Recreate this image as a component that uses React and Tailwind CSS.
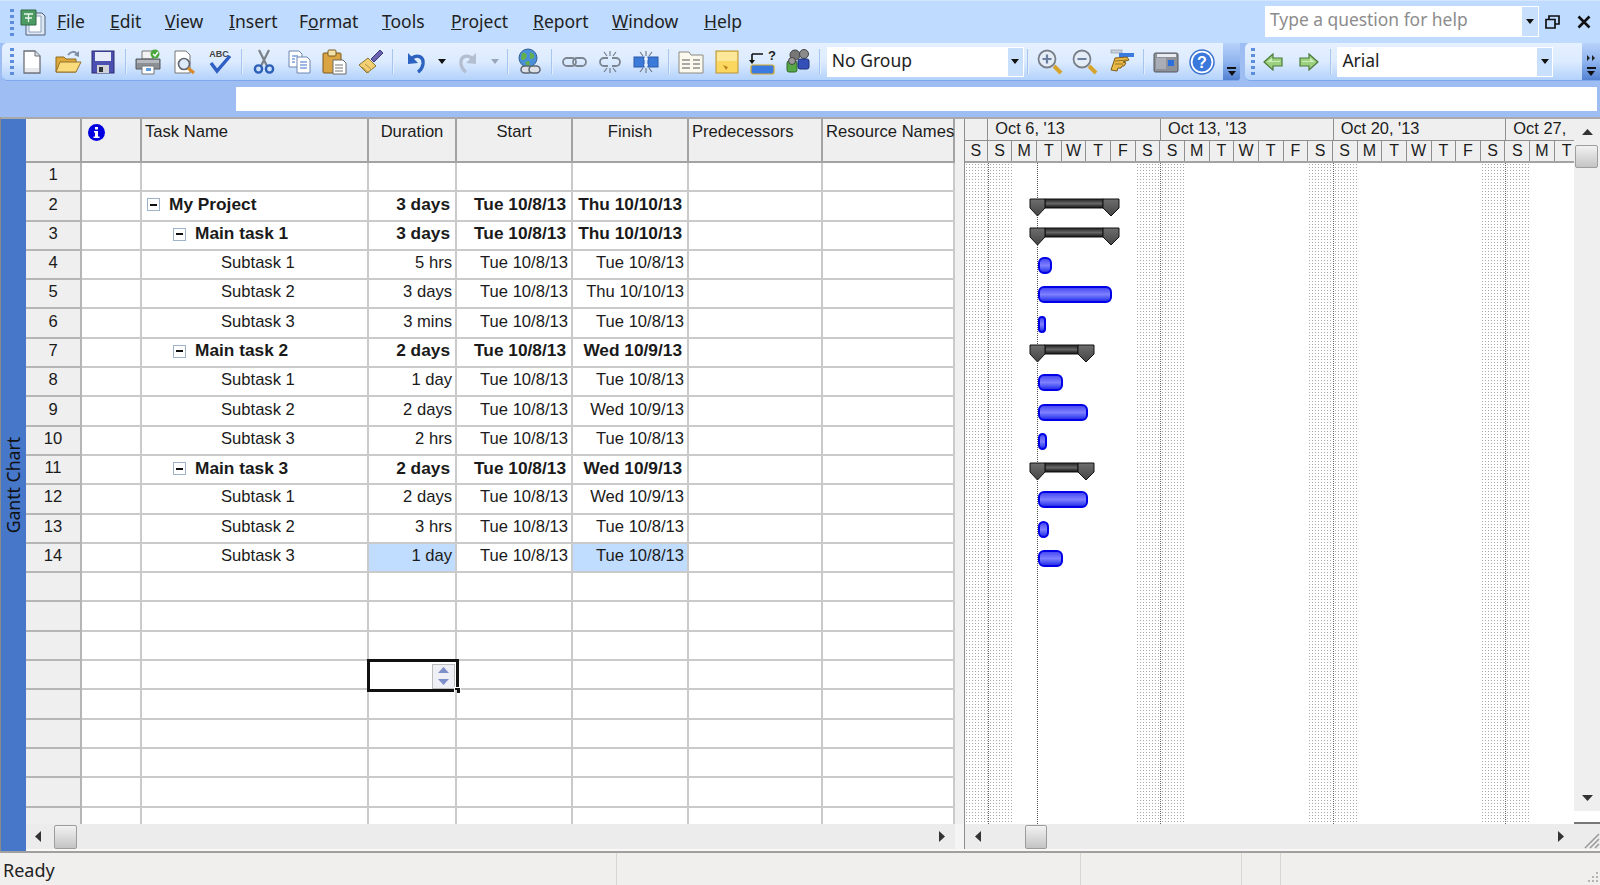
import React from 'react';

const arial = "font-['Liberation_Sans',Arial,sans-serif]";
const tahoma = "font-['Noto_Sans',Tahoma,sans-serif]";

const Ico = ({ children }) => (
  <svg width="28" height="28" viewBox="0 0 28 28" className="block">{children}</svg>
);

// toolbar icons
const NewIcon = () => (
  <Ico>
    <path d="M6 3h11l5 5v17H6z" fill="#fff" stroke="#6b6f78" strokeWidth="1.3" />
    <path d="M17 3v5h5" fill="#d8dde6" stroke="#6b6f78" strokeWidth="1" />
    <path d="M7 20h14v4H7z" fill="#e6e8ec" />
  </Ico>
);
const OpenIcon = () => (
  <Ico>
    <path d="M2 9h8l2 2h10v13H2z" fill="#e0a93b" stroke="#8a6a22" />
    <path d="M2 24l4-10h21l-5 10z" fill="#fbdc7c" stroke="#94712a" />
    <path d="M14 7c3-4 7-4 9-1" fill="none" stroke="#7f8ea6" strokeWidth="2" />
    <path d="M25 3l0 6-5-2z" fill="#7f8ea6" />
  </Ico>
);
const SaveIcon = () => (
  <Ico>
    <rect x="3" y="3" width="22" height="22" fill="#4a4fb0" stroke="#2a2d70" />
    <rect x="6" y="4" width="16" height="9" fill="#e8ecf8" />
    <rect x="8" y="17" width="12" height="8" fill="#d0d2d8" />
    <rect x="10" y="19" width="4" height="5" fill="#30323c" />
  </Ico>
);
const PrintIcon = () => (
  <Ico>
    <path d="M8 3h11v8H8z" fill="#f2f2f2" stroke="#777" />
    <path d="M2 11h24v10H2z" fill="#8b8f96" stroke="#55585e" />
    <path d="M3 12h22v3H3z" fill="#b6babf" />
    <path d="M8 18h12v8H8z" fill="#fff" stroke="#777" />
    <rect x="12" y="20" width="5" height="3" fill="#5d9be0" />
    <circle cx="21" cy="6" r="4.5" fill="#4aa83c" />
    <path d="M19 6l2 2 3-4" stroke="#fff" strokeWidth="1.4" fill="none" />
  </Ico>
);
const PreviewIcon = () => (
  <Ico>
    <path d="M5 3h11l4 4v18H5z" fill="#fff" stroke="#777" />
    <circle cx="14" cy="16" r="5.5" fill="#dcebf7" stroke="#62666e" strokeWidth="1.6" />
    <path d="M18 20l6 5" stroke="#d98a2a" strokeWidth="3.2" />
  </Ico>
);
const SpellIcon = () => (
  <Ico>
    <text x="14" y="9" textAnchor="middle" fontSize="9" fontWeight="700" fontFamily="Liberation Sans" fill="#444">ABC</text>
    <path d="M6 15l6 8L25 8" fill="none" stroke="#2f5fc4" strokeWidth="3.4" />
  </Ico>
);
const CutIcon = () => (
  <Ico>
    <path d="M9 2l8 16M19 2l-8 16" stroke="#7b7f86" strokeWidth="2.2" />
    <circle cx="8.5" cy="21" r="3.6" fill="none" stroke="#2c5fb8" strokeWidth="2.4" />
    <circle cx="19.5" cy="21" r="3.6" fill="none" stroke="#2c5fb8" strokeWidth="2.4" />
  </Ico>
);
const CopyIcon = () => (
  <Ico>
    <path d="M3 3h10l3 3v13H3z" fill="#fff" stroke="#6f86b0" />
    <path d="M11 9h10l3 3v13H11z" fill="#fff" stroke="#6f86b0" />
    <path d="M6 8h6M6 11h3M6 14h3M14 14h7M14 17h7M14 20h7" stroke="#3c74c8" strokeWidth="1.2" />
  </Ico>
);
const PasteIcon = () => (
  <Ico>
    <rect x="2" y="5" width="18" height="20" rx="1" fill="#d9a441" stroke="#7b5b1e" />
    <rect x="7" y="2" width="8" height="6" rx="1" fill="#f4e3a8" stroke="#7b5b1e" />
    <path d="M12 12h10l3 3v11H12z" fill="#fff" stroke="#6a6a6a" />
    <path d="M14 17h8M14 20h8M14 23h8" stroke="#777" />
  </Ico>
);
const PainterIcon = () => (
  <Ico>
    <path d="M2 17l9-7 8 8-9 7z" fill="#f1cf72" stroke="#8c7434" />
    <path d="M5 19l7 6M8 16l7 6" stroke="#b39140" />
    <path d="M14 11l3 3L26 5l-3-3z" fill="#6a62b0" stroke="#3e3a78" />
  </Ico>
);
const UndoIcon = () => (
  <Ico>
    <path d="M10 10c6-4 12-1 11 6-.5 3-2 6-5 8" fill="none" stroke="#2c62c0" strokeWidth="3.4" />
    <path d="M6 5v11l10-1z" fill="#2c62c0" />
  </Ico>
);
const RedoIcon = () => (
  <Ico>
    <path d="M18 10c-6-4-12-1-11 6 .5 3 2 6 5 8" fill="none" stroke="#b3bfd0" strokeWidth="3.4" />
    <path d="M22 5v11l-10-1z" fill="#b3bfd0" />
  </Ico>
);
const Caret = ({ color = '#111' }) => (
  <svg width="10" height="6" viewBox="0 0 10 6" className="block"><path d="M1 0h8L5 5z" fill={color} /></svg>
);
const Chain = ({ color = '#7d8591' }) => (
  <g fill="none" stroke={color} strokeWidth="1.8">
    <rect x="2" y="10" width="13" height="8" rx="4" />
    <rect x="12" y="10" width="13" height="8" rx="4" />
  </g>
);
const WebIcon = () => (
  <Ico>
    <circle cx="12" cy="10" r="9" fill="#4a90d8" stroke="#2f5d96" />
    <path d="M6 5c4-1 6 2 4 5s-4 2-5 1zM14 4c3 1 5 3 4 6l-4 1zM9 14l4-1 1 4-3 1z" fill="#63b04a" />
    <rect x="5" y="18" width="11" height="7" rx="3.5" fill="#dde1e6" stroke="#5c6672" strokeWidth="1.500" />
    <rect x="13" y="18" width="11" height="7" rx="3.5" fill="#dde1e6" stroke="#5c6672" strokeWidth="1.500" />
  </Ico>
);
const LinkIcon = () => (
  <Ico><Chain /></Ico>
);
const Sparks = () => (
  <path d="M14 3v5M8 4l3 4M20 4l-3 4M14 20v5M8 24l3-4M20 24l-3-4" stroke="#6f7680" strokeWidth="1.1" />
);
const UnlinkIcon = () => (
  <Ico>
    <Sparks />
    <path d="M12 10H8a4 4 0 000 8h4M16 10h4a4 4 0 010 8h-4" fill="none" stroke="#7d8591" strokeWidth="1.8" />
  </Ico>
);
const SplitIcon = () => (
  <Ico>
    <Sparks />
    <rect x="2" y="9" width="10" height="10" fill="#3b7ad9" stroke="#2d5ba8" />
    <rect x="16" y="9" width="10" height="10" fill="#3b7ad9" stroke="#2d5ba8" />
    <path d="M12 11h4M12 17h4" stroke="#fff" />
  </Ico>
);
const InfoFormIcon = () => (
  <Ico>
    <path d="M2 4h10l2 3h12v18H2z" fill="#fbf8ee" stroke="#8c8a80" />
    <path d="M5 12h8M16 12h7M5 16h8M16 16h7M5 20h8M16 20h7" stroke="#8d8d8d" strokeWidth="1.4" />
  </Ico>
);
const NotesIcon = () => (
  <Ico>
    <rect x="3" y="3" width="22" height="22" fill="#fbd75f" stroke="#b8913a" />
    <rect x="4" y="4" width="20" height="9" fill="#fde89a" />
    <path d="M10 17l5 2-2 3z" fill="#b9821e" />
  </Ico>
);
const AssignIcon = () => (
  <Ico>
    <path d="M4 6h11M4 6v7" stroke="#111" strokeWidth="1.6" fill="none" />
    <path d="M1 12h6l-3 4z" fill="#111" />
    <text x="20" y="12" fontSize="13" fontWeight="700" fontFamily="Liberation Sans" fill="#222">?</text>
    <rect x="3" y="17" width="23" height="9" rx="2" fill="#3b7be0" stroke="#d8a92c" strokeWidth="1.2" />
  </Ico>
);
const ResourceIcon = () => (
  <Ico>
    <circle cx="11" cy="7" r="5" fill="#777" stroke="#444" />
    <circle cx="20" cy="6" r="4.5" fill="#8a8a8a" stroke="#444" />
    <rect x="3" y="13" width="10" height="11" rx="2" fill="#55a845" stroke="#2e6b28" />
    <rect x="14" y="11" width="11" height="10" rx="2" fill="#3450b8" stroke="#1e2f78" />
    <circle cx="8" cy="13" r="3.5" fill="#999" stroke="#444" />
  </Ico>
);
const ZoomIcon = ({ plus }) => (
  <Ico>
    <circle cx="10" cy="11" r="8.5" fill="#e4ecf6" stroke="#7a808a" strokeWidth="1.8" />
    <path d="M5.500 11h9" stroke="#6a7f9f" strokeWidth="2.2" />
    {plus && <path d="M10 6.500v9" stroke="#6a7f9f" strokeWidth="2.2" />}
    <path d="M17 18l7 7" stroke="#d6a32c" strokeWidth="4" />
  </Ico>
);
const GotoIcon = () => (
  <Ico>
    <rect x="3" y="2" width="11" height="3" fill="#c9d2de" stroke="#8a8f98" strokeWidth=".6" />
    <rect x="11" y="5" width="15" height="4" fill="#3b7be0" />
    <path d="M3 22l4-12 12-1 2 3-6 2 3 1-2 3-2 0-1 2-3 0-1 3z" fill="#e8b947" stroke="#7d5d1a" />
    <path d="M7 13l12-1M7 16l8 0" stroke="#9a7424" />
  </Ico>
);
const CameraIcon = () => (
  <Ico>
    <rect x="1" y="5" width="24" height="19" rx="1.500" fill="#8e9198" stroke="#55585e" />
    <rect x="3" y="10" width="10" height="11" fill="#a9adb5" />
    <rect x="15" y="12" width="6" height="6" fill="#2c6fdc" />
    <rect x="4" y="6" width="19" height="3" fill="#e8ecf2" />
  </Ico>
);
const HelpIcon = () => (
  <Ico>
    <circle cx="14" cy="14" r="12" fill="#fff" stroke="#3c72cf" strokeWidth="1.5" />
    <circle cx="14" cy="14" r="9.500" fill="#3b78dc" />
    <text x="14" y="20" textAnchor="middle" fontSize="16" fontWeight="700" fontFamily="Liberation Sans" fill="#fff">?</text>
  </Ico>
);
const BackIcon = ({ flip }) => (
  <svg width="20" height="18" viewBox="0 0 20 18" className={flip ? 'block -scale-x-100' : 'block'}>
    <path d="M1 9l9-8v4h9v8h-9v4z" fill="#9ad07e" stroke="#4d7a3a" strokeWidth="1.2" />
    <path d="M4 9l5-4v3h8v1z" fill="#cdeebb" />
  </svg>
);
const AppIcon = () => (
  <svg width="26" height="28" viewBox="0 0 26 28" className="block">
    <path d="M6 5h16l3 3v19H6z" fill="#dfe7f2" stroke="#4f5f78" />
    <path d="M9 8h12v16H9z" fill="#fff" stroke="#8aa0bf" />
    <path d="M1 2h15v15H1z" fill="#4d9a63" stroke="#2f6b44" />
    <path d="M4 6h9M8.500 6v8M5 10h7" stroke="#e9f6ec" strokeWidth="1.300" fill="none" />
  </svg>
);

const Grip = () => (
  <div className="flex flex-col gap-[3px] w-[4px] shrink-0">
    <i className="block w-[4px] h-[3px] bg-[#5d8ddb]" />
    <i className="block w-[4px] h-[3px] bg-[#5d8ddb]" />
    <i className="block w-[4px] h-[3px] bg-[#5d8ddb]" />
    <i className="block w-[4px] h-[3px] bg-[#5d8ddb]" />
    <i className="block w-[4px] h-[3px] bg-[#5d8ddb]" />
  </div>
);
const Sep = () => <div className="w-[2px] h-[25px] mx-[3.5px] shrink-0 bg-[#a6c6ef] border-r border-white/70" />;
const Btn = ({ children }) => <div className="w-[35.7px] h-[30px] shrink-0 flex items-center justify-center">{children}</div>;

const Chevron = ({ className, dots }) => (
  <div className={`shrink-0 h-[38px] flex flex-col items-center justify-end pb-[4px] bg-gradient-to-b from-[#b7d2fa] via-[#8fb3ee] to-[#4f7fd0] ${className}`}>
    {dots && (
      <svg width="10" height="6" viewBox="0 0 10 6" className="block mb-[6px]"><path d="M1 0l3 3-3 3zM6 0l3 3-3 3z" fill="#222" /></svg>
    )}
    <div className="w-[9px] h-[2px] bg-[#111] mb-[2px]" />
    <Caret />
  </div>
);

const Combo = ({ label, className }) => (
  <div className={`h-[30px] bg-white flex items-stretch shrink-0 ${className}`}>
    <div className={`flex-1 pl-[5px] text-[17.5px] leading-[27px] text-[#222] ${tahoma}`}>{label}</div>
    <div className="w-[17px] bg-[#c9e0fd] border border-white flex items-center justify-center"><Caret /></div>
  </div>
);

const menus = [
  ['', 'F', 'ile', 'w-[53px]'],
  ['', 'E', 'dit', 'w-[55px]'],
  ['', 'V', 'iew', 'w-[64px]'],
  ['', 'I', 'nsert', 'w-[70px]'],
  ['F', 'o', 'rmat', 'w-[83px]'],
  ['', 'T', 'ools', 'w-[69px]'],
  ['', 'P', 'roject', 'w-[82px]'],
  ['', 'R', 'eport', 'w-[79px]'],
  ['', 'W', 'indow', 'w-[92px]'],
  ['', 'H', 'elp', 'w-[50px]'],
];

const colRow = 'w-[56px] shrink-0';
const colInd = 'w-[60px] shrink-0';
const colTask = 'w-[227px] shrink-0';
const colDur = 'w-[88px] shrink-0';
const colStart = 'w-[116px] shrink-0';
const colFin = 'w-[116px] shrink-0';
const colPred = 'w-[134px] shrink-0';
const colRes = 'w-[132px] shrink-0';

const rows = [
  { n: 1 },
  { n: 2, name: 'My Project', lvl: 0, dur: '3 days', start: 'Tue 10/8/13', fin: 'Thu 10/10/13' },
  { n: 3, name: 'Main task 1', lvl: 1, dur: '3 days', start: 'Tue 10/8/13', fin: 'Thu 10/10/13' },
  { n: 4, name: 'Subtask 1', lvl: 2, dur: '5 hrs', start: 'Tue 10/8/13', fin: 'Tue 10/8/13' },
  { n: 5, name: 'Subtask 2', lvl: 2, dur: '3 days', start: 'Tue 10/8/13', fin: 'Thu 10/10/13' },
  { n: 6, name: 'Subtask 3', lvl: 2, dur: '3 mins', start: 'Tue 10/8/13', fin: 'Tue 10/8/13' },
  { n: 7, name: 'Main task 2', lvl: 1, dur: '2 days', start: 'Tue 10/8/13', fin: 'Wed 10/9/13' },
  { n: 8, name: 'Subtask 1', lvl: 2, dur: '1 day', start: 'Tue 10/8/13', fin: 'Tue 10/8/13' },
  { n: 9, name: 'Subtask 2', lvl: 2, dur: '2 days', start: 'Tue 10/8/13', fin: 'Wed 10/9/13' },
  { n: 10, name: 'Subtask 3', lvl: 2, dur: '2 hrs', start: 'Tue 10/8/13', fin: 'Tue 10/8/13' },
  { n: 11, name: 'Main task 3', lvl: 1, dur: '2 days', start: 'Tue 10/8/13', fin: 'Wed 10/9/13' },
  { n: 12, name: 'Subtask 1', lvl: 2, dur: '2 days', start: 'Tue 10/8/13', fin: 'Wed 10/9/13' },
  { n: 13, name: 'Subtask 2', lvl: 2, dur: '3 hrs', start: 'Tue 10/8/13', fin: 'Tue 10/8/13' },
  { n: 14, name: 'Subtask 3', lvl: 2, dur: '1 day', start: 'Tue 10/8/13', fin: 'Tue 10/8/13', selected: true },
  { n: 15 }, { n: 16 }, { n: 17 }, { n: 18, active: true }, { n: 19 }, { n: 20 }, { n: 21 }, { n: 22 }, { n: 23 },
];

// widths in px, every bar starts from the same date
const bars = {
  2: { type: 'sum', w: 91 }, 3: { type: 'sum', w: 91 },
  4: { w: 14 }, 5: { w: 74 }, 6: { w: 8 },
  7: { type: 'sum', w: 66 },
  8: { w: 25 }, 9: { w: 50 }, 10: { w: 9 },
  11: { type: 'sum', w: 66 },
  12: { w: 50 }, 13: { w: 11 }, 14: { w: 25 },
};

const days = ['S', 'S', 'M', 'T', 'W', 'T', 'F', 'S', 'S', 'M', 'T', 'W', 'T', 'F', 'S', 'S', 'M', 'T', 'W', 'T', 'F', 'S', 'S', 'M', 'T'];
const weeks = ["Oct 6, '13", "Oct 13, '13", "Oct 20, '13", 'Oct 27,'];

const HeadCell = ({ className, children }) => (
  <div className={`h-full pt-[2px] px-[3px] text-[16.6px] leading-[22px] text-[#1c1c1c] bg-[#efefef] border-r-2 border-b-2 border-[#a3a3a3] ${className}`}>{children}</div>
);

const Cell = ({ className = '', children }) => (
  <div className={`h-full pb-[2px] flex items-center whitespace-nowrap border-r-2 border-b-2 border-[#cacaca] ${className}`}>{children}</div>
);

const Minus = () => (
  <span className="w-[13px] h-[13px] mr-[9px] shrink-0 border border-[#9fb3c8] bg-white flex items-center justify-center">
    <i className="block w-[7px] h-[2px] bg-[#111]" />
  </span>
);

const Row = ({ r }) => {
  const bold = r.lvl === 0 || r.lvl === 1 ? 'font-bold text-[17.3px]' : '';
  const pad = bold ? 'pr-[5px]' : 'pr-[3px]';
  return (
    <div className={`flex h-[29.3px] shrink-0 text-[16.6px] text-[#1a1a1a] ${arial}`}>
      <Cell className={`${colRow} justify-center bg-[#efefef] !border-[#b5b5b5]`}>{r.n <= 14 ? r.n : ''}</Cell>
      <Cell className={colInd} />
      <Cell className={`${colTask} ${bold} ${r.lvl === 0 ? 'pl-[5px]' : r.lvl === 1 ? 'pl-[31px]' : 'pl-[79px]'}`}>
        {r.lvl < 2 && <Minus />}
        {r.name}
      </Cell>
      <Cell className={`${colDur} ${bold} ${pad} justify-end relative ${r.selected ? 'bg-[#c0dcff]' : ''}`}>
        {r.dur}
        {r.active && (
          <div className="absolute -left-[2px] -top-[2px] w-[92px] h-[33px] border-[3px] border-[#111] bg-white flex justify-end items-center pr-[1px]">
            <div className="w-[23px] h-[25px] mt-[1px] bg-[#eef0f6] border border-[#bdbdbd] flex flex-col items-center justify-around">
              <svg width="11" height="6" viewBox="0 0 11 6" className="block"><path d="M5.500 0L11 6H0z" fill="#7d8fc8" /></svg>
              <svg width="11" height="6" viewBox="0 0 11 6" className="block"><path d="M0 0h11L5.500 6z" fill="#7d8fc8" /></svg>
            </div>
            <i className="absolute -right-[5px] -bottom-[5px] block w-[7px] h-[7px] bg-[#111] border border-white" />
          </div>
        )}
      </Cell>
      <Cell className={`${colStart} ${bold} ${pad} justify-end`}>{r.start}</Cell>
      <Cell className={`${colFin} ${bold} ${pad} justify-end ${r.selected ? 'bg-[#c0dcff]' : ''}`}>{r.fin}</Cell>
      <Cell className={colPred} />
      <Cell className={colRes} />
    </div>
  );
};

const SummaryBar = ({ w }) => (
  <svg width={w} height="19" viewBox={`0 0 ${w} 19`} className="block ml-[64px] mt-[1px]">
    <defs>
      <linearGradient id="sumg" x1="0" x2="0" y1="0" y2="1">
        <stop offset="0" stopColor="#6e6e6e" />
        <stop offset="1" stopColor="#444" />
      </linearGradient>
      <linearGradient id="sumb" x1="0" x2="0" y1="0" y2="1">
        <stop offset="0" stopColor="#222" />
        <stop offset="0.5" stopColor="#666" />
        <stop offset="1" stopColor="#111" />
      </linearGradient>
    </defs>
    <rect x="16" y="1" width={w - 33} height="9" fill="url(#sumb)" stroke="#111" />
    <path d="M1 1H16V10L8.500 18L1 10Z" fill="url(#sumg)" stroke="#111" />
    <path d={`M${w - 17} 1H${w - 1}V10L${w - 9} 18L${w - 17} 10Z`} fill="url(#sumg)" stroke="#111" />
  </svg>
);

const TaskBar = ({ w }) => (
  <div
    className="h-[17px] ml-[73px] rounded-[6px] border-2 border-[#0000e6] bg-gradient-to-b from-[#4a4af0] via-[#7f7fff] to-[#2a2ae8]"
    style={{ width: w }}
  />
);

const ScrollThumb = ({ className }) => (
  <div className={`rounded-[2px] border border-[#9d9d9d] bg-gradient-to-b from-[#f2f2f2] to-[#c4c4c4] shrink-0 ${className}`} />
);

export default function App() {
  return (
    <div className="w-[1600px] h-[885px] flex flex-col overflow-hidden bg-white">
      {/* menu bar */}
      <div className={`h-[43px] shrink-0 bg-[#bfdbff] flex items-center border-t border-[#d4e6fd] ${tahoma}`}>
        <div className="ml-[10px]"><Grip /></div>
        <div className="ml-[6px] w-[37px]"><AppIcon /></div>
        <div className="flex pb-[2px] text-[17.5px] text-[#222]">
          {menus.map(([pre, key, rest, w]) => (
            <div key={rest} className={w}>{pre}<u>{key}</u>{rest}</div>
          ))}
        </div>
        <div className="ml-auto h-[31px] w-[274px] -mt-[1px] bg-white flex items-stretch">
          <div className="flex-1 pl-[5px] text-[17.4px] leading-[27px] text-[#8c8c8c]">Type a question for help</div>
          <div className="w-[18px] bg-[#c9e0fd] border border-white flex items-center justify-center"><Caret /></div>
        </div>
        <div className="w-[61px] flex items-center justify-between pl-[6px] pr-[9px]">
          <svg width="15" height="14" viewBox="0 0 15 14" className="block"><path d="M4 4V1h10v8h-4M1 4.500h9V13H1z" fill="none" stroke="#111" strokeWidth="1.700" /></svg>
          <svg width="14" height="14" viewBox="0 0 14 14" className="block"><path d="M1.500 1.500l11 11M12.500 1.500l-11 11" stroke="#111" strokeWidth="2.600" /></svg>
        </div>
      </div>

      {/* toolbars */}
      <div className="h-[39px] shrink-0 bg-[#9ebdf2] flex">
        <div className="w-[1238px] ml-[2px] h-[38px] flex items-center rounded-l-[5px] rounded-r-[3px] overflow-hidden pl-[8px] bg-gradient-to-b from-[#e6f1ff] via-[#dcebff] to-[#b3d2fb] border-b border-[#7fa8ea]">
          <Grip />
          <Btn><NewIcon /></Btn><Btn><OpenIcon /></Btn><Btn><SaveIcon /></Btn>
          <Sep />
          <Btn><PrintIcon /></Btn><Btn><PreviewIcon /></Btn><Btn><SpellIcon /></Btn>
          <Sep />
          <Btn><CutIcon /></Btn><Btn><CopyIcon /></Btn><Btn><PasteIcon /></Btn><Btn><PainterIcon /></Btn>
          <Sep />
          <Btn><UndoIcon /></Btn>
          <div className="w-[17px] flex justify-center shrink-0"><Caret /></div>
          <Btn><RedoIcon /></Btn>
          <div className="w-[17px] flex justify-center shrink-0"><Caret color="#9aa6b8" /></div>
          <Sep />
          <Btn><WebIcon /></Btn>
          <Sep />
          <Btn><LinkIcon /></Btn><Btn><UnlinkIcon /></Btn><Btn><SplitIcon /></Btn>
          <Sep />
          <Btn><InfoFormIcon /></Btn><Btn><NotesIcon /></Btn><Btn><AssignIcon /></Btn><Btn><ResourceIcon /></Btn>
          <Sep />
          <Combo label="No Group" className="w-[197px] ml-[2px]" />
          <Sep />
          <Btn><ZoomIcon plus /></Btn><Btn><ZoomIcon /></Btn><Btn><GotoIcon /></Btn>
          <Sep />
          <Btn><CameraIcon /></Btn><Btn><HelpIcon /></Btn>
          <Chevron className="w-[17px] ml-auto" />
        </div>
        <div className="w-[355px] ml-[5px] h-[38px] flex items-center rounded-l-[5px] overflow-hidden pl-[6px] bg-gradient-to-b from-[#e6f1ff] via-[#dcebff] to-[#b3d2fb] border-b border-[#7fa8ea]">
          <Grip />
          <Btn><BackIcon /></Btn><Btn><BackIcon flip /></Btn>
          <Sep />
          <Combo label="Arial" className="w-[216px] ml-[2px]" />
          <Chevron className="w-[18px] ml-auto" dots />
        </div>
      </div>

      {/* entry bar */}
      <div className="h-[35px] shrink-0 bg-[#9ebdf2] pl-[236px] pr-[3px] pt-[5px] pb-[6px]">
        <div className="h-full bg-white" />
      </div>

      {/* main view */}
      <div className="flex-1 min-h-0 flex border-t-2 border-[#a9a9a9] border-l border-l-[#8a8a8a] -mr-px">
        <div className={`w-[25px] shrink-0 bg-[#4677c9] flex items-center justify-center text-[17.6px] text-[#111] ${tahoma}`}>
          <span className="[writing-mode:vertical-rl] rotate-180 whitespace-nowrap">Gantt Chart</span>
        </div>
        <div className="flex-1 min-w-0 flex flex-col">
          <div className="flex-1 min-h-0 flex">
            {/* task sheet */}
            <div className="w-[929px] shrink-0 flex flex-col overflow-hidden">
              <div className={`flex h-[44px] shrink-0 ${arial}`}>
                <HeadCell className={colRow} />
                <HeadCell className={colInd}>
                  <svg width="17" height="17" viewBox="0 0 17 17" className="block ml-[3px] mt-[3px]">
                    <circle cx="8.500" cy="8.500" r="8.500" fill="#0000e0" />
                    <path d="M7 3h3v2.500H7zM6 7h4v5.500h1.500V14h-6v-1.500H7V8.500H6z" fill="#fff" />
                  </svg>
                </HeadCell>
                <HeadCell className={colTask}>Task Name</HeadCell>
                <HeadCell className={`${colDur} text-center`}>Duration</HeadCell>
                <HeadCell className={`${colStart} text-center`}>Start</HeadCell>
                <HeadCell className={`${colFin} text-center`}>Finish</HeadCell>
                <HeadCell className={colPred}>Predecessors</HeadCell>
                <HeadCell className={`${colRes} whitespace-nowrap`}>Resource Names</HeadCell>
              </div>
              {rows.map((r) => <Row key={r.n} r={r} />)}
            </div>

            <div className="w-[10px] shrink-0 bg-[#f0f0f0] border-r border-[#8e8e8e]" />

            {/* gantt */}
            <div className={`flex-1 min-w-0 flex flex-col overflow-hidden ${arial}`}>
              <div className="h-[22px] shrink-0 flex bg-[#efefef] text-[16.4px] text-[#1c1c1c]">
                <div className="w-[23.3px] shrink-0 border-r border-b border-[#8f8f8f]" />
                {weeks.map((w) => (
                  <div key={w} className="w-[172.7px] shrink-0 pl-[7px] leading-[19px] border-r border-b border-[#8f8f8f] whitespace-nowrap">{w}</div>
                ))}
              </div>
              <div className="h-[22px] shrink-0 flex bg-[#efefef] text-[16px] text-[#1c1c1c] border-b-2 border-[#a3a3a3]">
                {days.map((d, i) => (
                  <div key={i} className={`${i === 0 ? 'w-[22.7px]' : 'w-[24.67px]'} shrink-0 text-center leading-[19px] border-r border-[#8f8f8f]`}>{d}</div>
                ))}
              </div>
              <div className="flex-1 min-h-0 relative">
                <div className="flex h-full">
                  {days.map((d, i) => (
                    <div
                      key={i}
                      className={`${i === 0 ? 'w-[22.7px]' : 'w-[24.67px]'} shrink-0 h-full ${i % 7 < 2 ? 'bg-[radial-gradient(#aaaaaa_0.7px,transparent_0.9px)] bg-[length:3px_3px]' : ''} ${i % 7 === 1 ? 'border-l border-dotted border-[#666]' : ''}`}
                    />
                  ))}
                </div>
                {/* today line */}
                <div className="absolute top-0 bottom-0 left-[72px] border-l border-dotted border-[#555]" />
                <div className="absolute inset-0 flex flex-col">
                  {rows.map((r) => (
                    <div key={r.n} className="h-[29.3px] shrink-0 flex items-center">
                      {bars[r.n] && (bars[r.n].type === 'sum' ? <SummaryBar w={bars[r.n].w} /> : <TaskBar w={bars[r.n].w} />)}
                    </div>
                  ))}
                </div>
              </div>
            </div>

            {/* vertical scrollbar */}
            <div className="w-[27px] shrink-0 bg-[#efefef] flex flex-col items-center">
              <div className="h-[26px] flex items-center justify-center">
                <svg width="11" height="6" viewBox="0 0 11 6" className="block"><path d="M5.500 0L11 6H0z" fill="#333" /></svg>
              </div>
              <ScrollThumb className="w-[23px] h-[23px] -ml-[3px]" />
              <div className="flex-1" />
              <svg width="11" height="6" viewBox="0 0 11 6" className="block mb-[10px]"><path d="M0 0h11L5.500 6z" fill="#333" /></svg>
              <div className="w-[28px] h-[13px] mb-0 bg-white border-b-2 border-r-2 border-[#777]" />
            </div>
          </div>

          {/* bottom scrollbars */}
          <div className="h-[27px] shrink-0 flex bg-[#ececec] border-b-2 border-[#f8f8f8]">
            <div className="w-[929px] shrink-0 flex items-center pl-[9px]">
              <svg width="6" height="11" viewBox="0 0 6 11" className="block"><path d="M6 0v11L0 5.500z" fill="#333" /></svg>
              <ScrollThumb className="w-[23px] h-[24px] ml-[13px]" />
              <svg width="6" height="11" viewBox="0 0 6 11" className="block ml-auto mr-[10px]"><path d="M0 0v11l6-5.500z" fill="#333" /></svg>
            </div>
            <div className="w-[10px] shrink-0 bg-[#f4f4f4] border-r border-[#8e8e8e]" />
            <div className="flex-1 flex items-center pl-[10px] pr-[36px]">
              <svg width="6" height="11" viewBox="0 0 6 11" className="block"><path d="M6 0v11L0 5.500z" fill="#333" /></svg>
              <ScrollThumb className="w-[22px] h-[24px] ml-[44px]" />
              <svg width="6" height="11" viewBox="0 0 6 11" className="block ml-auto"><path d="M0 0v11l6-5.500z" fill="#333" /></svg>
            </div>
            <svg width="18" height="18" viewBox="0 0 18 18" className="block self-end -ml-[18px] mr-[1px]">
              <path d="M17 3L3 17M17 8L8 17M17 13l-4 4" stroke="#999" strokeWidth="1.500" />
            </svg>
          </div>
        </div>
      </div>

      {/* status bar */}
      <div className={`h-[34px] shrink-0 flex border-t-2 border-[#a0a0a0] bg-[#f1efed] text-[18px] text-[#222] ${tahoma}`}>
        <div className="w-[617px] pl-[3px] leading-[35px] border-r border-[#d8d6d3]">Ready</div>
        <div className="w-[464px] border-r border-[#d8d6d3]" />
        <div className="w-[161px] border-r border-[#d8d6d3]" />
        <div className="w-[39px] border-r border-[#d8d6d3]" />
        <div className="flex-1 flex justify-end items-end pr-[1px] pb-[1px]">
          <svg width="14" height="14" viewBox="0 0 14 14" className="block">
            <path d="M11 2h2v2h-2zM11 6h2v2h-2zM7 6h2v2H7zM11 10h2v2h-2zM7 10h2v2H7zM3 10h2v2H3z" fill="#b5b3b0" />
          </svg>
        </div>
      </div>
    </div>
  );
}
